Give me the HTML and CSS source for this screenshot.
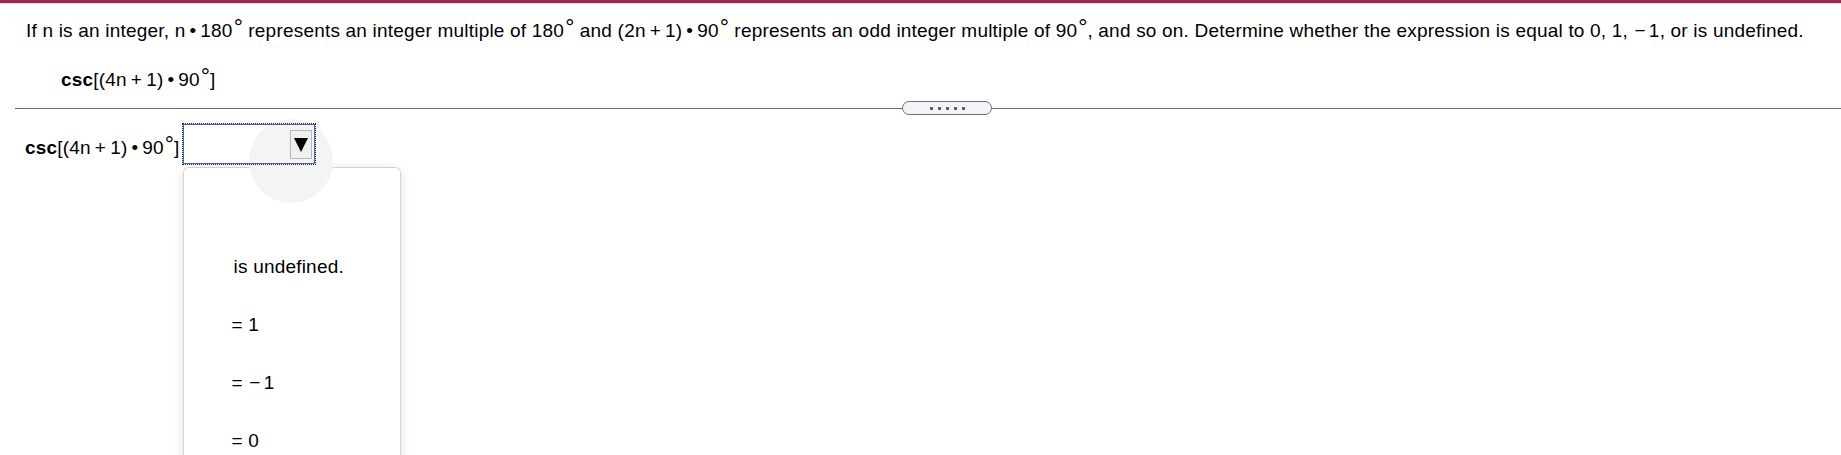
FILE: index.html
```html
<!DOCTYPE html>
<html>
<head>
<meta charset="utf-8">
<link rel="stylesheet" href="styles.css">
</head>
<body>
<div class="topbar"></div>
<div class="question">
  <p class="prompt">If n is an integer, n<span class="op">•</span>180<sup class="deg">°</sup> represents an integer multiple of 180<sup class="deg">°</sup> and (2n<span class="op">+</span>1)<span class="op">•</span>90<sup class="deg">°</sup> represents an odd integer multiple of 90<sup class="deg">°</sup>, and so on. Determine whether the expression is equal to 0, 1, <span class="minus">−</span>1, or is undefined.</p>
  <p class="expr"><b>csc</b>[(4n<span class="op">+</span>1)<span class="op">•</span>90<sup class="deg">°</sup>]</p>
</div>
<div class="divider">
  <span class="line short"></span>
  <span class="pill"><i></i><i></i><i></i><i></i><i></i></span>
  <span class="line long"></span>
</div>
<div class="answer">
  <span class="label"><b>csc</b>[(4n<span class="op">+</span>1)<span class="op">•</span>90<sup class="deg">°</sup>]</span>
  <div class="select-wrap">
    <div class="select">
      <span class="arrow"><svg width="14" height="15" viewBox="0 0 14 15"><polygon points="0,1 14,1 7,15" fill="#000"/></svg></span>
    </div>
    <div class="ripple"></div>
    <div class="menu">
      <div class="item first">is undefined.</div>
      <div class="item">= 1</div>
      <div class="item">= <span class="minus">−</span>1</div>
      <div class="item">= 0</div>
    </div>
  </div>
</div>
</body>
</html>
```

FILE: styles.css
```css
html, body {
  margin: 0;
  padding: 0;
  background: #fff;
  overflow: hidden;
}
body {
  font-family: "Liberation Sans", Arial, sans-serif;
  font-size: 19px;
  color: #000;
  width: 1841px;
  height: 455px;
  letter-spacing: 0.2px;
}
.topbar {
  height: 3px;
  background: #a3234f;
  border-bottom: 1px solid #dcdde0;
}
.question {
  padding-left: 26px;
}
.prompt {
  margin: 0;
  padding-top: 16px;
  line-height: 22px;
  white-space: nowrap;
}
.expr {
  margin: 0;
  padding-top: 27px;
  padding-left: 35px;
  line-height: 22px;
}
.op {
  margin: 0 4px;
}
.minus {
  margin: 0 3px 0 1px;
}
.deg {
  font-size: 23px;
  line-height: 0;
  vertical-align: 2px;
  margin-left: 1px;
  letter-spacing: 0;
}
.divider {
  display: flex;
  align-items: center;
  margin-top: 10px;
  padding-left: 15px;
  height: 14px;
}
.line {
  height: 1px;
  background: #5f6b77;
}
.line.short { width: 887px; }
.line.long { flex: 1; }
.pill {
  width: 88px;
  height: 12px;
  border: 1px solid #67727e;
  border-radius: 8px;
  background: #f2f4f6;
  display: flex;
  align-items: center;
  justify-content: center;
  gap: 5px;
}
.pill i {
  width: 3px;
  height: 3px;
  background: #4a4f55;
  border-radius: 1px;
}
.answer {
  display: flex;
  align-items: flex-start;
  padding-left: 25px;
  margin-top: 9px;
}
.label {
  line-height: 22px;
  padding-top: 13px;
  margin-right: 3px;
}
.select-wrap {
  position: relative;
}
.select {
  position: relative;
  z-index: 2;
  width: 128px;
  height: 38px;
  border: 1px solid #4066c8;
  outline: 1px dotted #222;
  display: flex;
  align-items: center;
  justify-content: flex-end;
  padding-right: 2px;
  box-sizing: content-box;
}
.arrow {
  width: 20px;
  height: 27px;
  background: #f0f0f0;
  border: 1px solid #b9b9b9;
  display: flex;
  align-items: center;
  justify-content: center;
}
.arrow svg { display: block; }
.ripple {
  position: absolute;
  z-index: 1;
  left: 66px;
  top: -5px;
  width: 84px;
  height: 84px;
  border-radius: 50%;
  background: radial-gradient(circle, #f3f3f3 0%, #f4f4f4 85%, rgba(246,246,246,0.6) 100%);
}
.menu {
  position: absolute;
  z-index: 0;
  left: 0;
  top: 43px;
  width: 218px;
  height: 320px;
  border: 1px solid #d4d4d4;
  border-radius: 6px;
  background: #fff;
  box-shadow: 0 2px 10px rgba(0, 0, 0, 0.14);
  padding-left: 48px;
  box-sizing: border-box;
}
.item {
  line-height: 22px;
  height: 58px;
  white-space: nowrap;
}
.item.first {
  margin-top: 88px;
  padding-left: 2px;
}
```
